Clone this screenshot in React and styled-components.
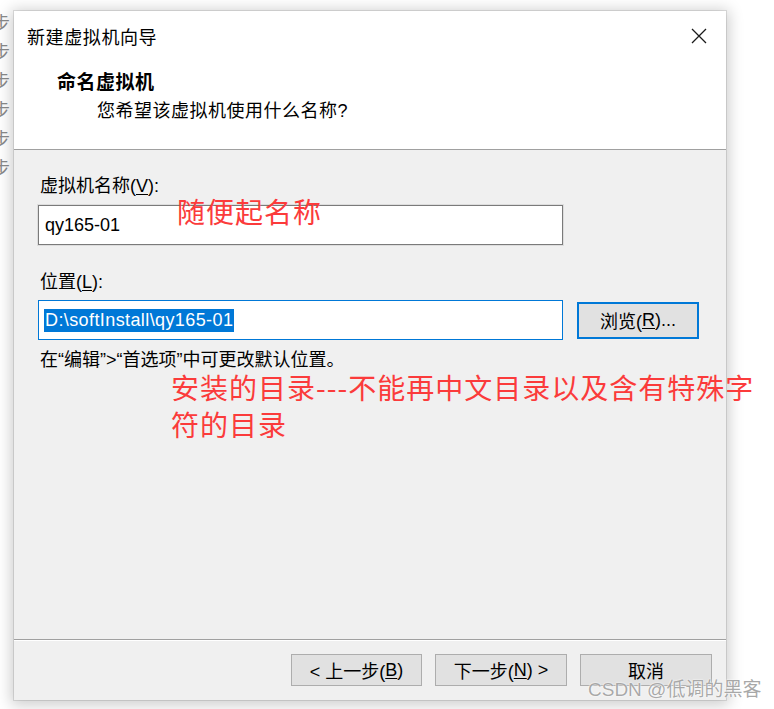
import React from "react";
import styled, { createGlobalStyle } from "styled-components";

const Global = createGlobalStyle`
  html, body { margin: 0; padding: 0; background: #ffffff; }
  body { font-family: "Liberation Sans", "Noto Sans CJK SC", sans-serif; }
`;

const FONT = `"Liberation Sans", "Noto Sans CJK SC", sans-serif`;
const CJK = `"Noto Sans CJK SC", "Liberation Sans", sans-serif`;

const Screen = styled.div`
  position: relative;
  width: 774px;
  height: 709px;
  display: flex;
  overflow: hidden;
  background: #ffffff;
`;

const BackStrip = styled.div`
  width: 14px;
  flex: none;
  padding-top: 8px;
  display: flex;
  flex-direction: column;
  overflow: hidden;
`;

const BackGlyph = styled.span`
  display: block;
  margin-left: -8px;
  font-family: ${CJK};
  font-size: 18px;
  line-height: 29px;
  color: #8a8a8a;
  white-space: nowrap;
`;

const Window = styled.div`
  position: relative;
  z-index: 1;
  width: 712px;
  height: 689px;
  margin-top: 11px;
  flex: none;
  display: flex;
  flex-direction: column;
  background: #f0f0f0;
  box-shadow: 0 0 0 1px rgba(0, 0, 0, 0.1), 0 2px 14px 3px rgba(0, 0, 0, 0.2);
  font-family: ${FONT};
  color: #000;
`;

const Header = styled.div`
  height: 139px;
  box-sizing: border-box;
  background: #ffffff;
  border-bottom: 1px solid #a0a0a0;
`;

const TitleBar = styled.div`
  height: 50px;
  padding: 0 19px 0 13px;
  display: flex;
  align-items: center;
  justify-content: space-between;
`;

const TitleText = styled.span`
  font-family: ${CJK};
  font-size: 18px;
  line-height: 22px;
  letter-spacing: 0.6px;
`;

const CloseIcon = styled.svg`
  width: 16px;
  height: 16px;
  display: block;
`;

const Heading = styled.div`
  margin-top: 9px;
  padding-left: 43px;
  display: flex;
  flex-direction: column;
  gap: 8px;
`;

const HeadingTitle = styled.div`
  font-family: ${CJK};
  font-size: 19px;
  font-weight: 700;
  line-height: 22px;
  letter-spacing: 0.5px;
`;

const HeadingSub = styled.div`
  padding-left: 40px;
  font-size: 18px;
  line-height: 22px;
  letter-spacing: 0.5px;
`;

const Body = styled.div`
  position: relative;
  flex: 1;
  padding: 25px 0 0 24px;
  display: flex;
  flex-direction: column;
`;

const Label = styled.div`
  margin-left: 2px;
  font-size: 18px;
  line-height: 22px;
  margin-top: ${(p) => p.$top || 0}px;
`;

const Mn = styled.span`
  text-decoration: underline;
  text-underline-offset: 2px;
`;

const TextBox = styled.div`
  width: 525px;
  height: 40px;
  box-sizing: border-box;
  margin-top: ${(p) => p.$top || 0}px;
  background: #ffffff;
  border: 1px solid ${(p) => (p.$focused ? "#0078d7" : "#7a7a7a")};
  box-shadow: ${(p) => (p.$focused ? "none" : "0 0 0 1px rgba(0,0,0,0.08)")};
  padding-left: ${(p) => (p.$focused ? 5 : 6)}px;
  display: flex;
  align-items: center;
  font-size: 18px;
  white-space: nowrap;
`;

const Selected = styled.span`
  background: #0078d7;
  color: #ffffff;
  line-height: 23px;
  padding: 0 1px;
  letter-spacing: 0.4px;
`;

const Row = styled.div`
  display: flex;
  align-items: center;
  gap: 14px;
  margin-top: 7px;
`;

const BrowseButton = styled.div`
  width: 122px;
  height: 37px;
  box-sizing: border-box;
  border: 2px solid #0078d7;
  background: #e1e1e1;
  display: flex;
  align-items: center;
  justify-content: center;
  font-size: 18px;
`;

const Hint = styled.div`
  margin: 9px 0 0 2px;
  font-size: 18px;
  line-height: 22px;
`;

const Note = styled.div`
  position: absolute;
  left: ${(p) => p.$left}px;
  top: ${(p) => p.$top}px;
  font-family: ${CJK};
  font-size: 28px;
  line-height: 37px;
  color: #fb3b3b;
  white-space: nowrap;
  letter-spacing: 1px;
`;

const Footer = styled.div`
  height: 61px;
  box-sizing: border-box;
  border-top: 1px solid #a0a0a0;
  box-shadow: inset 0 1px 0 #ffffff;
  padding: 14px 14px 0 0;
  display: flex;
  justify-content: flex-end;
  align-items: flex-start;
  gap: 13px;
`;

const Button = styled.div`
  width: ${(p) => p.$w || 132}px;
  height: 32px;
  box-sizing: border-box;
  border: 1px solid #adadad;
  background: #e1e1e1;
  display: flex;
  align-items: center;
  justify-content: center;
  font-size: 18px;
  white-space: pre;
`;

const Watermark = styled.div`
  position: absolute;
  z-index: 2;
  left: 588px;
  top: 678px;
  font-family: ${FONT};
  font-size: 19px;
  line-height: 24px;
  color: rgba(140, 140, 140, 0.75);
  text-shadow: 0 0 1px #ffffff, 0 0 2px #ffffff;
  white-space: nowrap;
`;

export default function App() {
  const strip = [0, 1, 2, 3, 4, 5];
  return (
    <>
      <Global />
      <Screen>
        <BackStrip>
          {strip.map((i) => (
            <BackGlyph key={i}>步</BackGlyph>
          ))}
        </BackStrip>
        <Window>
          <Header>
            <TitleBar>
              <TitleText>新建虚拟机向导</TitleText>
              <CloseIcon viewBox="0 0 16 16">
                <path d="M1 1 L15 15 M15 1 L1 15" stroke="#1a1a1a" strokeWidth="1.3" fill="none" />
              </CloseIcon>
            </TitleBar>
            <Heading>
              <HeadingTitle>命名虚拟机</HeadingTitle>
              <HeadingSub>您希望该虚拟机使用什么名称?</HeadingSub>
            </Heading>
          </Header>
          <Body>
            <Label>
              虚拟机名称(<Mn>V</Mn>):
            </Label>
            <TextBox $top={8}>qy165-01</TextBox>
            <Label $top={26}>
              位置(<Mn>L</Mn>):
            </Label>
            <Row>
              <TextBox $focused>
                <Selected>D:\softInstall\qy165-01</Selected>
              </TextBox>
              <BrowseButton>
                浏览(<Mn>R</Mn>)...
              </BrowseButton>
            </Row>
            <Hint>在“编辑”&gt;“首选项”中可更改默认位置。</Hint>
            <Note $left={163} $top={43}>随便起名称</Note>
            <Note $left={157} $top={219}>
              安装的目录---不能再中文目录以及含有特殊字
              <br />
              符的目录
            </Note>
          </Body>
          <Footer>
            <Button $w={131}>
              {"< 上一步("}
              <Mn>B</Mn>
              {")"}
            </Button>
            <Button>
              {"下一步("}
              <Mn>N</Mn>
              {") >"}
            </Button>
            <Button>取消</Button>
          </Footer>
        </Window>
        <Watermark>CSDN @低调的黑客</Watermark>
      </Screen>
    </>
  );
}
